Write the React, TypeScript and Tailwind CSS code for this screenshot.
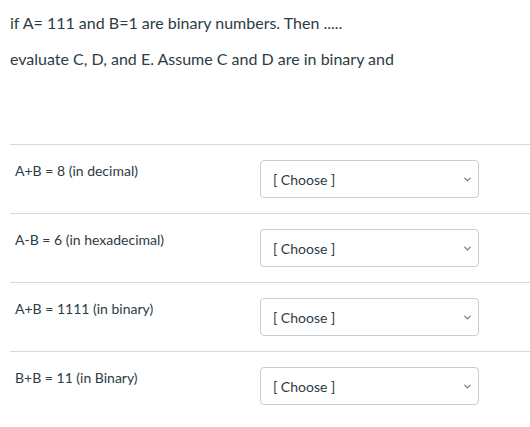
import { ChevronDown } from 'lucide-react';

const rows = [
  'A+B = 8 (in decimal)',
  'A-B = 6 (in hexadecimal)',
  'A+B = 1111 (in binary)',
  'B+B = 11 (in Binary)',
];

function AnswerSelect() {
  return (
    <div className="flex h-[38px] w-[219px] items-center justify-between rounded-[4px] border border-[#c7cdd1] bg-white pl-[12px] pr-[5px]">
      <span className="text-[14px] text-[#2d3b45]">[ Choose ]</span>
      <ChevronDown className="h-[11px] w-[11px] text-[#6b7780]" strokeWidth={2.5} />
    </div>
  );
}

export default function App() {
  return (
    <div className="h-[427px] w-[530px] bg-white font-['Lato','Noto_Sans',sans-serif] text-[#2d3b45]">
      <div className="pl-[10px] pt-[11px]">
        <p className="text-[16px] leading-[24px]">if A= 111 and B=1 are binary numbers. Then .....</p>
        <p className="mt-[12px] text-[16px] leading-[24px]">
          evaluate C, D, and E. Assume C and D are in binary and
        </p>
      </div>

      <div className="ml-[10px] mt-[73px]">
        {rows.map((label) => (
          <div key={label} className="flex border-t border-[#d7dadc] pb-[15px] pt-[15px]">
            <div className="mt-[1px] w-[250px] pl-[5px] text-[14px] leading-[20px]">{label}</div>
            <AnswerSelect />
          </div>
        ))}
      </div>
    </div>
  );
}
